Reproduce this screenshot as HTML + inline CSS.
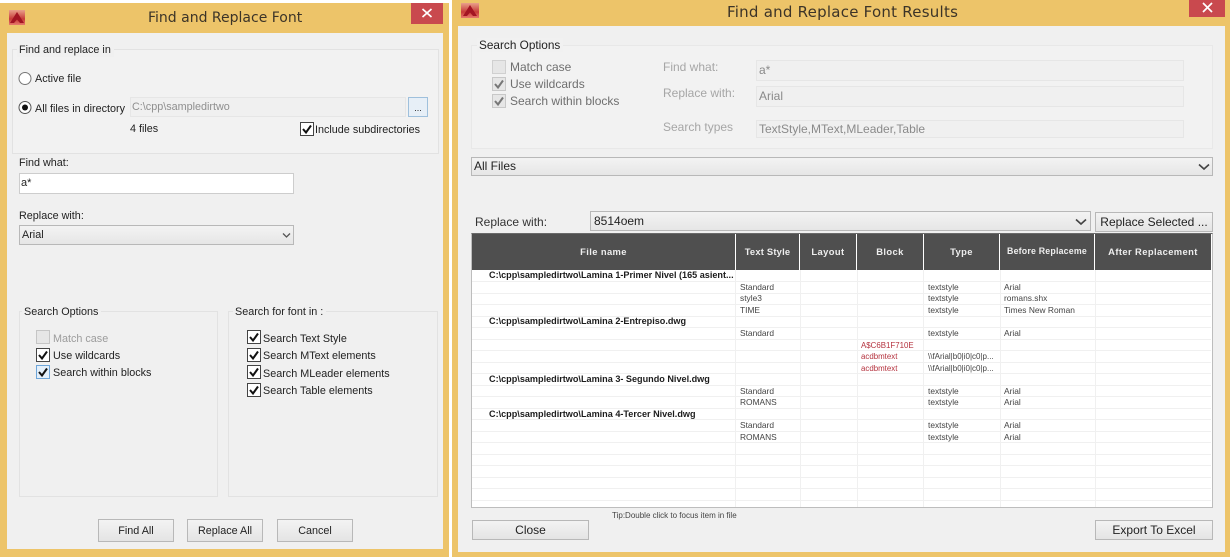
<!DOCTYPE html>
<html><head><meta charset="utf-8"><title>Find and Replace Font</title>
<style>
html,body{margin:0;padding:0;background:#fff}
body{width:1230px;height:557px;position:relative;overflow:hidden;font-family:"Liberation Sans",sans-serif;font-size:12px;color:#222}
.left{font-size:10.8px}
.a,.t{position:absolute;box-sizing:border-box}
.t{white-space:nowrap;line-height:14px;height:14px}
.left .t{margin-top:1px}
.left .t.title{margin-top:0}
.title{font-family:"DejaVu Sans",sans-serif;font-size:15px;color:#3c3428;line-height:20px;height:20px}
.g{color:#9c9c9c}
.gb{position:absolute;box-sizing:border-box;border:1px solid #e2e2e2}
.leg{position:absolute;background:#f0f0f0;padding:0 3px 0 2px;line-height:14px;height:14px;white-space:nowrap}
.inp{position:absolute;box-sizing:border-box;background:#fff;border:1px solid #cdcdcd;line-height:19px;padding-left:1px;font-size:11px}
.dis{position:absolute;box-sizing:border-box;background:#f0f0f0;border:1px solid #e6e6e6;color:#8a8a8a;line-height:19px;padding-left:2px;font-size:12px}
.btn{position:absolute;box-sizing:border-box;border:1px solid #b8b8b8;background:linear-gradient(#f3f3f3,#e4e4e4);text-align:center;color:#222;white-space:nowrap}
.sel{position:absolute;box-sizing:border-box;border:1px solid #b8b8b8;background:linear-gradient(#f3f3f3,#e6e6e6);padding-left:2px;white-space:nowrap}
.cb{position:absolute;box-sizing:border-box;width:14px;height:14px;border:1px solid #444;background:#fff}
.cb svg{display:block}
.cb.dim{border-color:#c5c5c5;background:#e6e6e6}
.cb.hot{border-color:#6ea5d8;background:#e3effa}
.h{position:absolute;top:234px;height:36px;background:#4f4f4f;color:#eee;font-weight:bold;font-size:9.4px;letter-spacing:.4px;line-height:35px;text-align:center;white-space:nowrap;overflow:hidden}
.c{position:absolute;font-size:8.4px;line-height:11px;height:11px;white-space:nowrap;color:#444}
.b{font-weight:bold;font-size:9.1px;color:#1c1c1c;left:489px}
.r{color:#b5333f;font-size:7.9px}
.m{font-size:8px}
</style></head><body>

<!-- LEFT DIALOG -->
<div class="left">
<div class="a" style="left:0;top:3px;width:449px;height:554px;background:#edc469"></div>
<div class="a" style="left:7px;top:33px;width:436px;height:516px;background:#f0f0f0"></div>
<div class="a" style="left:9px;top:10px;width:16px;height:15px;background:linear-gradient(#e9a08a,#c73a38 60%,#e77a6c)"></div>
<svg class="a" style="left:9px;top:10px" width="16" height="15"><path d="M8 2 L15 13 H11 L8 9.5 L5 13 H1 Z" fill="#a31523"/></svg>
<div class="t title" style="left:148px;top:8px;font-size:14px">Find and Replace Font</div>
<div class="a" style="left:411px;top:3px;width:32px;height:21px;background:#c9494e"></div>
<svg class="a" style="left:411px;top:3px" width="32" height="21"><path d="M11.5 6 L20.5 14 M20.5 6 L11.5 14" stroke="#fff" stroke-width="1.7"/></svg>

<div class="gb" style="left:12px;top:49px;width:427px;height:105px;background:#f2f2f2"></div>
<div class="leg" style="left:17px;top:43px">Find and replace in</div>
<svg class="a" style="left:18px;top:71px" width="15" height="44"><circle cx="7" cy="7.5" r="6" fill="#fff" stroke="#777"/><circle cx="7" cy="36.5" r="6" fill="#fff" stroke="#555"/><circle cx="7" cy="36.5" r="3" fill="#111"/></svg>
<div class="t" style="left:35px;top:71px">Active file</div>
<div class="t" style="left:35px;top:101px">All files in directory</div>
<div class="dis" style="left:130px;top:97px;width:276px;height:20px;color:#8f8f8f;font-size:10.8px;padding-left:1px;line-height:18px">C:\cpp\sampledirtwo</div>
<div class="btn" style="left:408px;top:97px;width:20px;height:20px;background:#e7eff7;border-color:#9fc0dc;font-size:9px;line-height:20px">...</div>
<div class="t" style="left:130px;top:121px">4 files</div>
<div class="cb" style="left:300px;top:122px"><svg width="12" height="12"><path d="M2 6 L5 9.5 L10 2.5" fill="none" stroke="#111" stroke-width="2"/></svg></div>
<div class="t" style="left:315px;top:122px">Include subdirectories</div>

<div class="t" style="left:19px;top:155px">Find what:</div>
<div class="inp" style="left:19px;top:173px;width:275px;height:21px">a*</div>
<div class="t" style="left:19px;top:208px">Replace with:</div>
<div class="sel" style="left:19px;top:225px;width:275px;height:20px;line-height:19px">Arial</div>
<svg class="a" style="left:282px;top:232px" width="9" height="7"><path d="M1 1.5 L4.5 5 L8 1.5" fill="none" stroke="#555" stroke-width="1.3"/></svg>

<div class="gb" style="left:19px;top:311px;width:199px;height:186px"></div>
<div class="leg" style="left:22px;top:305px">Search Options</div>
<div class="cb dim" style="left:36px;top:330px"></div>
<div class="t g" style="left:53px;top:331px">Match case</div>
<div class="cb" style="left:36px;top:348px"><svg width="12" height="12"><path d="M2 6 L5 9.5 L10 2.5" fill="none" stroke="#111" stroke-width="2"/></svg></div>
<div class="t" style="left:53px;top:348px">Use wildcards</div>
<div class="cb hot" style="left:36px;top:365px"><svg width="12" height="12"><path d="M2 6 L5 9.5 L10 2.5" fill="none" stroke="#111" stroke-width="2"/></svg></div>
<div class="t" style="left:53px;top:365px">Search within blocks</div>

<div class="gb" style="left:228px;top:311px;width:210px;height:186px"></div>
<div class="leg" style="left:233px;top:305px">Search for font in :</div>
<div class="cb" style="left:247px;top:330px"><svg width="12" height="12"><path d="M2 6 L5 9.5 L10 2.5" fill="none" stroke="#111" stroke-width="2"/></svg></div>
<div class="t" style="left:263px;top:331px">Search Text Style</div>
<div class="cb" style="left:247px;top:348px"><svg width="12" height="12"><path d="M2 6 L5 9.5 L10 2.5" fill="none" stroke="#111" stroke-width="2"/></svg></div>
<div class="t" style="left:263px;top:348px">Search MText elements</div>
<div class="cb" style="left:247px;top:365px"><svg width="12" height="12"><path d="M2 6 L5 9.5 L10 2.5" fill="none" stroke="#111" stroke-width="2"/></svg></div>
<div class="t" style="left:263px;top:366px">Search MLeader elements</div>
<div class="cb" style="left:247px;top:383px"><svg width="12" height="12"><path d="M2 6 L5 9.5 L10 2.5" fill="none" stroke="#111" stroke-width="2"/></svg></div>
<div class="t" style="left:263px;top:383px">Search Table elements</div>

<div class="btn" style="left:98px;top:519px;width:76px;height:23px;line-height:22px">Find All</div>
<div class="btn" style="left:187px;top:519px;width:76px;height:23px;line-height:22px">Replace All</div>
<div class="btn" style="left:277px;top:519px;width:76px;height:23px;line-height:22px">Cancel</div>
</div>

<!-- RIGHT DIALOG -->
<div class="a" style="left:452px;top:0;width:778px;height:557px;background:#edc469"></div>
<div class="a" style="left:458px;top:26px;width:767px;height:526px;background:#f0f0f0"></div>
<div class="a" style="left:461px;top:3px;width:18px;height:15px;background:linear-gradient(#e9a08a,#c73a38 60%,#e77a6c)"></div>
<svg class="a" style="left:461px;top:3px" width="18" height="15"><path d="M9 2 L16 13 H12 L9 9.5 L6 13 H2 Z" fill="#a31523"/></svg>
<div class="t title" style="left:727px;top:2px;letter-spacing:.24px">Find and Replace Font Results</div>
<div class="a" style="left:1189px;top:0;width:36px;height:17px;background:#c9494e"></div>
<svg class="a" style="left:1189px;top:0" width="36" height="17"><path d="M14 3 L23 12 M23 3 L14 12" stroke="#fff" stroke-width="1.7"/></svg>

<div class="gb" style="left:471px;top:45px;width:742px;height:104px;background:#f2f2f2;border-color:#e8e8e8"></div>
<div class="leg" style="left:477px;top:38px;font-size:11.8px;background:#f1f1f1">Search Options</div>
<div class="cb dim" style="left:492px;top:60px;border-color:#d0d0d0"></div>
<div class="t" style="left:510px;top:60px;color:#6f6f6f">Match case</div>
<div class="cb dim" style="left:492px;top:77px;border-color:#c8c8c8"><svg width="12" height="12"><path d="M2 6 L5 9.5 L10 2.5" fill="none" stroke="#777" stroke-width="2"/></svg></div>
<div class="t" style="left:510px;top:77px;color:#6f6f6f">Use wildcards</div>
<div class="cb dim" style="left:492px;top:94px;border-color:#c8c8c8"><svg width="12" height="12"><path d="M2 6 L5 9.5 L10 2.5" fill="none" stroke="#777" stroke-width="2"/></svg></div>
<div class="t" style="left:510px;top:94px;color:#6f6f6f">Search within blocks</div>
<div class="t" style="left:663px;top:60px;color:#a6a6a6">Find what:</div>
<div class="t" style="left:663px;top:86px;color:#a6a6a6">Replace with:</div>
<div class="t" style="left:663px;top:120px;color:#a6a6a6">Search types</div>
<div class="dis" style="left:756px;top:60px;width:428px;height:21px">a*</div>
<div class="dis" style="left:756px;top:86px;width:428px;height:21px">Arial</div>
<div class="dis" style="left:756px;top:120px;width:428px;height:18px;line-height:16px">TextStyle,MText,MLeader,Table</div>

<div class="sel" style="left:471px;top:157px;width:742px;height:19px;line-height:17px">All Files</div>
<svg class="a" style="left:1198px;top:163px" width="12" height="8"><path d="M1 1.5 L6 6 L11 1.5" fill="none" stroke="#444" stroke-width="1.6"/></svg>

<div class="t" style="left:475px;top:215px;color:#333">Replace with:</div>
<div class="sel" style="left:590px;top:211px;width:501px;height:20px;line-height:18px;padding-left:3px">8514oem</div>
<svg class="a" style="left:1075px;top:218px" width="12" height="8"><path d="M1 1.5 L6 6 L11 1.5" fill="none" stroke="#444" stroke-width="1.6"/></svg>
<div class="btn" style="left:1095px;top:212px;width:118px;height:20px;line-height:18px">Replace Selected ...</div>

<!-- table -->
<div class="a" style="left:471px;top:233px;width:742px;height:275px;background:#fff;border:1px solid #bdbdbd;border-top:1px solid #6a6a6a"></div>
<div class="h" style="left:472px;width:263px">File name</div>
<div class="h" style="left:736px;width:63px;letter-spacing:.2px">Text Style</div>
<div class="h" style="left:800px;width:56px">Layout</div>
<div class="h" style="left:857px;width:66px">Block</div>
<div class="h" style="left:924px;width:75px">Type</div>
<div class="h" style="left:1000px;width:94px;font-size:8.8px;letter-spacing:.2px">Before Replaceme</div>
<div class="h" style="left:1095px;width:116px">After Replacement</div>

<svg class="a" style="left:472px;top:270px" width="739" height="237">
<g stroke="#f0f0f0" stroke-width="1" shape-rendering="crispEdges">
<path d="M0 11.5H740M0 23.5H740M0 34.5H740M0 46.5H740M0 57.5H740M0 69.5H740M0 80.5H740M0 92.5H740M0 103.5H740M0 115.5H740M0 126.5H740M0 138.5H740M0 149.5H740M0 161.5H740M0 172.5H740M0 184.5H740M0 195.5H740M0 207.5H740M0 218.5H740M0 230.5H740"/>
<path d="M263.5 0V238M328.5 0V238M385.5 0V238M451.5 0V238M528.5 0V238M623.5 0V238"/>
</g></svg>

<div class="c b" style="top:270px">C:\cpp\sampledirtwo\Lamina 1-Primer Nivel (165 asient...</div>
<div class="c" style="left:740px;top:282px">Standard</div><div class="c" style="left:928px;top:282px">textstyle</div><div class="c" style="left:1004px;top:282px">Arial</div>
<div class="c" style="left:740px;top:293px">style3</div><div class="c" style="left:928px;top:293px">textstyle</div><div class="c" style="left:1004px;top:293px">romans.shx</div>
<div class="c" style="left:740px;top:305px">TIME</div><div class="c" style="left:928px;top:305px">textstyle</div><div class="c" style="left:1004px;top:305px">Times New Roman</div>
<div class="c b" style="top:316px">C:\cpp\sampledirtwo\Lamina 2-Entrepiso.dwg</div>
<div class="c" style="left:740px;top:328px">Standard</div><div class="c" style="left:928px;top:328px">textstyle</div><div class="c" style="left:1004px;top:328px">Arial</div>
<div class="c r" style="left:861px;top:340px">A$C6B1F710E</div>
<div class="c r" style="left:861px;top:351px">acdbmtext</div><div class="c m" style="left:928px;top:351px">\\fArial|b0|i0|c0|p...</div>
<div class="c r" style="left:861px;top:363px">acdbmtext</div><div class="c m" style="left:928px;top:363px">\\fArial|b0|i0|c0|p...</div>
<div class="c b" style="top:374px">C:\cpp\sampledirtwo\Lamina 3- Segundo Nivel.dwg</div>
<div class="c" style="left:740px;top:386px">Standard</div><div class="c" style="left:928px;top:386px">textstyle</div><div class="c" style="left:1004px;top:386px">Arial</div>
<div class="c" style="left:740px;top:397px">ROMANS</div><div class="c" style="left:928px;top:397px">textstyle</div><div class="c" style="left:1004px;top:397px">Arial</div>
<div class="c b" style="top:409px">C:\cpp\sampledirtwo\Lamina 4-Tercer Nivel.dwg</div>
<div class="c" style="left:740px;top:420px">Standard</div><div class="c" style="left:928px;top:420px">textstyle</div><div class="c" style="left:1004px;top:420px">Arial</div>
<div class="c" style="left:740px;top:432px">ROMANS</div><div class="c" style="left:928px;top:432px">textstyle</div><div class="c" style="left:1004px;top:432px">Arial</div>

<div class="c m" style="left:612px;top:510px;color:#444">Tip:Double click to focus item in file</div>
<div class="btn" style="left:472px;top:520px;width:117px;height:20px;line-height:19px">Close</div>
<div class="btn" style="left:1095px;top:520px;width:118px;height:20px;line-height:19px">Export To Excel</div>
</body></html>
